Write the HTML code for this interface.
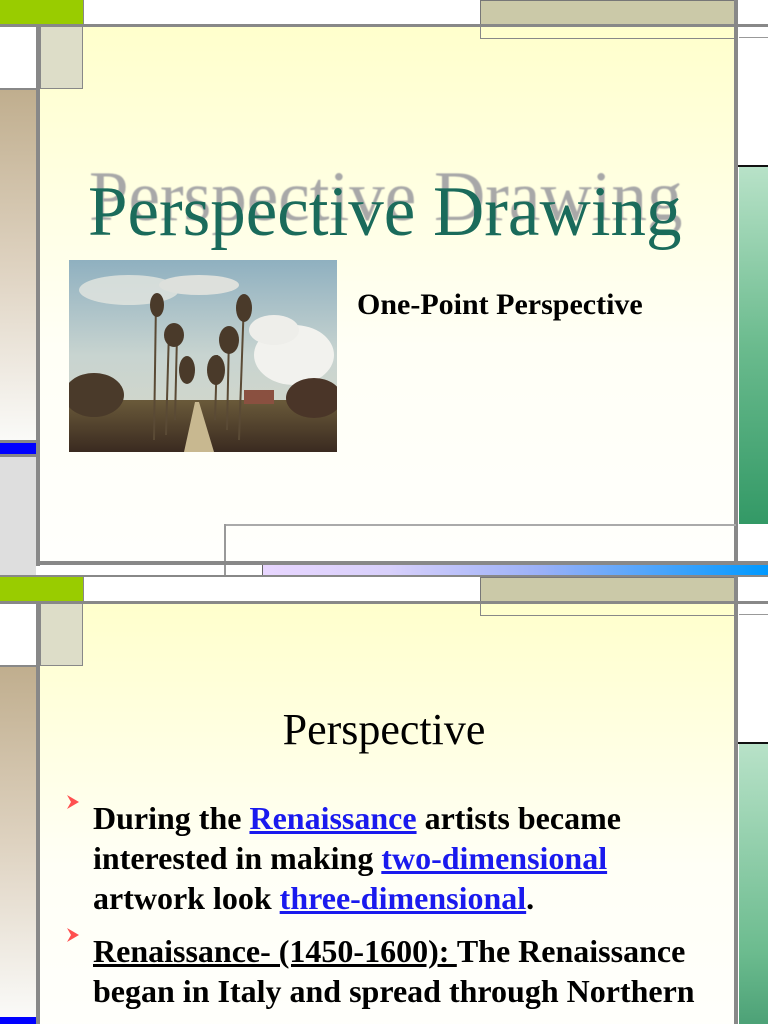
<!DOCTYPE html>
<html><head><meta charset="utf-8"><style>
*{margin:0;padding:0;box-sizing:border-box}
body{width:768px;height:1024px;overflow:hidden;background:#fff;position:relative;font-family:"Liberation Serif",serif}
.s{position:absolute;left:0;width:768px;height:577px;overflow:hidden}
.a{position:absolute}
</style></head><body>

<!-- slide 1 -->
<div class="s" style="top:0">
  <div class="a" style="left:40px;top:26px;width:696px;height:536px;background:linear-gradient(#ffffcc,#fffff6 60%,#fffffc)"></div>
  <div class="a" style="left:0;top:0;width:84px;height:25px;background:#99cc00;border-right:1px solid #888"></div>
  <div class="a" style="left:480px;top:0;width:257px;height:25px;background:#cbc9a8;border:1px solid #777"></div>
  <div class="a" style="left:0;top:24px;width:768px;height:3px;background:#888"></div>
  <div class="a" style="left:480px;top:26px;width:256px;height:13px;border:1px solid #888;border-top:none"></div>
  <div class="a" style="left:739px;top:37px;width:29px;height:1px;background:#999"></div>
  <div class="a" style="left:40px;top:27px;width:43px;height:62px;background:#ddddc8;border:1px solid #888;border-top:none"></div>
  <div class="a" style="left:0;top:88px;width:40px;height:2px;background:#888"></div>
  <div class="a" style="left:0;top:90px;width:36px;height:350px;background:linear-gradient(#c0ae8e,#ded2c0 50%,#fafaf8)"></div>
  <div class="a" style="left:0;top:440px;width:36px;height:3px;background:#888"></div>
  <div class="a" style="left:0;top:443px;width:36px;height:11px;background:#0000ff"></div>
  <div class="a" style="left:0;top:454px;width:36px;height:3px;background:#888"></div>
  <div class="a" style="left:0;top:457px;width:36px;height:120px;background:#dedede"></div>
  <div class="a" style="left:36px;top:26px;width:4px;height:540px;background:#888"></div>
  <div class="a" style="left:734px;top:0;width:4px;height:577px;background:#888"></div>
  <div class="a" style="left:738px;top:165px;width:30px;height:2px;background:#111"></div>
  <div class="a" style="left:739px;top:167px;width:29px;height:357px;background:linear-gradient(#b8e2c8,#6bbb8e 50%,#339966)"></div>
  <div class="a" style="left:224px;top:524px;width:512px;height:2px;background:#aaa"></div>
  <div class="a" style="left:224px;top:524px;width:2px;height:53px;background:#999"></div>
  <div class="a" style="left:36px;top:561px;width:732px;height:4px;background:#888"></div>
  <div class="a" style="left:262px;top:565px;width:506px;height:11px;background:linear-gradient(90deg,#e8d6ff,#d8d0fb 25%,#9ab0f8 55%,#0099ff);border-left:1px solid #666"></div>
  <div class="a" style="left:0;top:575px;width:768px;height:2px;background:#888"></div>

  <div class="a" style="left:89px;top:157px;font-size:71px;color:#a8a8a8;white-space:nowrap;filter:blur(0.6px)">Perspective Drawing</div>
  <div class="a" style="left:88px;top:172px;font-size:71px;color:#1a6b5b;white-space:nowrap">Perspective Drawing</div>

  <svg class="a" style="left:69px;top:260px" width="268" height="192" viewBox="0 0 268 192">
    <defs><linearGradient id="sky" x1="0" y1="0" x2="0" y2="1"><stop offset="0" stop-color="#8fb0c0"/><stop offset="0.5" stop-color="#c8d4d0"/><stop offset="1" stop-color="#d8d8c8"/></linearGradient>
    <linearGradient id="gr" x1="0" y1="0" x2="0" y2="1"><stop offset="0" stop-color="#6a5a3a"/><stop offset="1" stop-color="#3a2a20"/></linearGradient></defs>
    <rect width="268" height="192" fill="url(#sky)"/>
    <ellipse cx="60" cy="30" rx="50" ry="15" fill="#e4e6e0" opacity="0.8"/>
    <ellipse cx="225" cy="95" rx="40" ry="30" fill="#f2f2ee"/>
    <ellipse cx="205" cy="70" rx="25" ry="15" fill="#eeeeea"/>
    <ellipse cx="130" cy="25" rx="40" ry="10" fill="#dde0dc"/>
    <rect y="140" width="268" height="52" fill="url(#gr)"/>
    <ellipse cx="25" cy="135" rx="30" ry="22" fill="#4a3a2a"/>
    <ellipse cx="245" cy="138" rx="28" ry="20" fill="#4a3528"/>
    <rect x="175" y="130" width="30" height="14" fill="#8a5040"/>
    <polygon points="115,192 145,192 130,142 126,142" fill="#c8b890"/>
    <g stroke="#5a4a35" stroke-width="2">
      <line x1="87" y1="40" x2="85" y2="180"/><line x1="100" y1="70" x2="97" y2="175"/><line x1="108" y1="75" x2="106" y2="160"/>
      <line x1="175" y1="40" x2="170" y2="180"/><line x1="160" y1="75" x2="158" y2="170"/><line x1="148" y1="95" x2="146" y2="160"/>
    </g>
    <g fill="#4a3a2a">
      <ellipse cx="88" cy="45" rx="7" ry="12"/><ellipse cx="105" cy="75" rx="10" ry="12"/><ellipse cx="118" cy="110" rx="8" ry="14"/>
      <ellipse cx="175" cy="48" rx="8" ry="14"/><ellipse cx="160" cy="80" rx="10" ry="14"/><ellipse cx="147" cy="110" rx="9" ry="15"/>
    </g>
  </svg>
  <div class="a" style="left:357px;top:288px;font-size:30px;font-weight:bold;color:#000;white-space:nowrap">One-Point Perspective</div>
</div>

<!-- slide 2 -->
<div class="s" style="top:577px;height:447px">
  <div class="a" style="left:40px;top:26px;width:696px;height:440px;background:linear-gradient(#ffffcc,#fffff6 60%,#fffffc)"></div>
  <div class="a" style="left:0;top:0;width:84px;height:25px;background:#99cc00;border-right:1px solid #888"></div>
  <div class="a" style="left:480px;top:0;width:257px;height:25px;background:#cbc9a8;border:1px solid #777"></div>
  <div class="a" style="left:0;top:24px;width:768px;height:3px;background:#888"></div>
  <div class="a" style="left:480px;top:26px;width:256px;height:13px;border:1px solid #888;border-top:none"></div>
  <div class="a" style="left:739px;top:37px;width:29px;height:1px;background:#999"></div>
  <div class="a" style="left:40px;top:27px;width:43px;height:62px;background:#ddddc8;border:1px solid #888;border-top:none"></div>
  <div class="a" style="left:0;top:88px;width:40px;height:2px;background:#888"></div>
  <div class="a" style="left:0;top:90px;width:36px;height:350px;background:linear-gradient(#c0ae8e,#ded2c0 50%,#fafaf8)"></div>
  <div class="a" style="left:0;top:440px;width:36px;height:10px;background:#0000ff"></div>
  <div class="a" style="left:36px;top:26px;width:4px;height:440px;background:#888"></div>
  <div class="a" style="left:734px;top:0;width:4px;height:447px;background:#888"></div>
  <div class="a" style="left:738px;top:165px;width:30px;height:2px;background:#111"></div>
  <div class="a" style="left:739px;top:167px;width:29px;height:300px;background:linear-gradient(#b8e2c8,#6bbb8e 70%,#449a70)"></div>

  <div class="a" style="left:0;width:768px;top:127px;text-align:center;font-size:44px;color:#000">Perspective</div>
  <div class="a" style="left:93px;top:221px;font-size:32px;font-weight:bold;line-height:40px;color:#000;white-space:nowrap">
    During the <u style="color:#1a1aee">Renaissance</u> artists became<br>
    interested in making <u style="color:#1a1aee">two-dimensional</u><br>
    artwork look <u style="color:#1a1aee">three-dimensional</u>.
  </div>
  <div class="a" style="left:93px;top:354px;font-size:32px;font-weight:bold;line-height:40px;color:#000;white-space:nowrap">
    <u>Renaissance- (1450-1600): </u>The Renaissance<br>
    began in Italy and spread through Northern
  </div>
  <svg class="a" style="left:66px;top:217px" width="14" height="16" viewBox="0 0 14 16"><path d="M1 1 L13 8 L1 15 L5 8 Z" fill="#ff5050"/></svg>
  <svg class="a" style="left:66px;top:350px" width="14" height="16" viewBox="0 0 14 16"><path d="M1 1 L13 8 L1 15 L5 8 Z" fill="#ff5050"/></svg>
</div>
</body></html>
